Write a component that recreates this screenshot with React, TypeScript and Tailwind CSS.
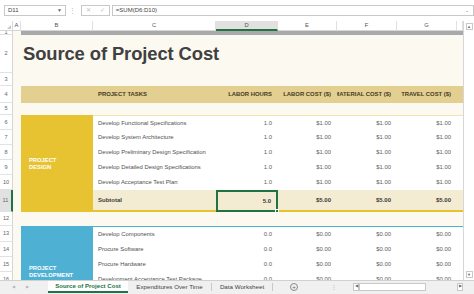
import React from 'react';

// grid row for sheet row r is R[r] (R[0] is the column header row)
const R = [
  'row-start-1', 'row-start-2', 'row-start-3', 'row-start-4', 'row-start-5', 'row-start-6',
  'row-start-7', 'row-start-8', 'row-start-9', 'row-start-10', 'row-start-11', 'row-start-12',
  'row-start-13', 'row-start-14', 'row-start-15', 'row-start-16', 'row-start-17', 'row-start-18',
  'row-start-19', 'row-start-20',
];
// grid column: 1 = row headers, 2 = A, 3 = B ... 9 = H
const COL = ['', 'col-start-1', 'col-start-2', 'col-start-3', 'col-start-4', 'col-start-5', 'col-start-6', 'col-start-7', 'col-start-8', 'col-start-9'];

const Cell: React.FC<{ c: number; r: number; className?: string; children?: React.ReactNode }> = ({ c, r, className = '', children }) => (
  <div className={`${COL[c]} ${R[r]} min-w-0 overflow-hidden whitespace-nowrap ${className}`}>{children}</div>
);

const designTasks = [
  'Develop Functional Specifications',
  'Develop System Architecture',
  'Develop Preliminary Design Specification',
  'Develop Detailed Design Specifications',
  'Develop Acceptance Test Plan',
];
const devTasks = ['Develop Components', 'Procure Software', 'Procure Hardware', 'Development Acceptance Test Package'];

const num = 'flex items-center justify-end pr-[6px] text-[5.9px] text-[#5e5e5e]';

const App: React.FC = () => {
  const rowNums = Array.from({ length: 16 }, (_, i) => i + 1);
  return (
    <div className="w-[474px] h-[294px] overflow-hidden bg-white flex flex-col font-['Liberation_Sans',Arial,sans-serif] text-[#444]">
      {/* formula bar */}
      <div className="h-[21px] shrink-0 flex items-center">
        <div className="ml-[4px] w-[62px] h-[11px] border border-[#c8c8c8] flex items-center justify-between px-[3px] text-[6px] text-[#444]">
          <span>D11</span>
          <span className="text-[5px] text-[#666]">▼</span>
        </div>
        <span className="ml-[3px] text-[7px] leading-none text-[#b0b0b0]">⋮</span>
        <div className="ml-[5px] w-[29px] h-[11px] border border-[#c8c8c8] flex items-center justify-around text-[6px] text-[#c0c0c0]">
          <span>✕</span>
          <span>✓</span>
        </div>
        <div className="ml-[2px] w-[363px] h-[11px] border border-[#c8c8c8] flex items-center justify-between pl-[3px] pr-[4px] text-[6px] text-[#444]">
          <span>=SUM(D6:D10)</span>
          <span className="text-[5px] text-[#777]">⌄</span>
        </div>
      </div>

      <div className="flex-1 min-h-0 flex">
        {/* sheet */}
        <div className="w-[463px] h-full overflow-hidden bg-[#fcf9f1]">
          <div className="grid grid-cols-[13px_8px_72px_123px_62px_59px_60px_60px_6px] grid-rows-[10px_4px_38px_13px_17px_12px_15px_15px_15px_15px_15px_22px_14px_16px_15px_15px_15px_15px_15px]">
            {/* column headers */}
            <Cell c={1} r={0} className="bg-white border-r border-b border-[#d6d6d6] relative">
              <span className="absolute right-[1px] bottom-[1px] w-0 h-0 border-l-[4px] border-l-transparent border-b-[4px] border-b-[#c8c8c8]" />
            </Cell>
            {['A', 'B', 'C', 'D', 'E', 'F', 'G', ''].map((l, i) => (
              <Cell
                key={i}
                c={i + 2}
                r={0}
                className={`flex items-center justify-center text-[5.8px] text-[#555] border-r border-[#e0e0e0] ${
                  l === 'D' ? 'bg-[#e1e1e1] border-b-2 border-b-[#217346]' : 'bg-white border-b border-b-[#d6d6d6]'
                }`}
              >
                {l}
              </Cell>
            ))}

            {/* row headers */}
            {rowNums.map((n) => (
              <Cell
                key={n}
                c={1}
                r={n}
                className={`flex items-center justify-center text-[5.6px] text-[#666] border-b border-[#e2e2e2] ${
                  n === 11 ? 'bg-[#e1e1e1] border-r-2 border-r-[#217346]' : 'bg-white border-r border-r-[#d6d6d6]'
                }`}
              >
                {n}
              </Cell>
            ))}
            <div className="col-start-1 row-start-18 row-span-3 bg-white border-r border-[#d6d6d6]" />

            {/* row 1 */}
            <div className="col-start-3 col-span-7 row-start-2 bg-[#a9a9a9]" />

            {/* row 2: title */}
            <div className="col-start-3 col-span-7 row-start-3 flex items-center pl-[2px]">
              <span className="text-[18.4px] font-bold text-[#404040] tracking-[-0.1px]">Source of Project Cost</span>
            </div>

            {/* row 4: table header */}
            <Cell c={3} r={4} className="bg-[#e3cf8f]" />
            <Cell c={4} r={4} className="bg-[#e3cf8f] flex items-center pl-[5px] text-[5.9px] font-bold text-[#453a22]">PROJECT TASKS</Cell>
            {['LABOR HOURS', 'LABOR COST ($)', 'MATERIAL COST ($)', 'TRAVEL COST ($)'].map((h, i) => (
              <Cell key={h} c={i + 5} r={4} className="bg-[#e3cf8f] flex items-center justify-end pr-[6px] text-[5.9px] font-bold text-[#453a22]">
                <span className="shrink-0">{h}</span>
              </Cell>
            ))}
            <Cell c={9} r={4} className="bg-[#e3cf8f]" />

            {/* project design block */}
            <div className="col-start-3 row-start-7 row-span-6 bg-[#e7c331] flex items-center pl-[8px] text-[5.8px] leading-[7px] font-bold text-white">
              <div>
                PROJECT
                <br />
                DESIGN
              </div>
            </div>
            {designTasks.map((t, i) => (
              <React.Fragment key={t}>
                <Cell c={4} r={6 + i} className={`bg-white flex items-center pl-[5px] text-[5.9px] text-[#505050] ${i === 0 ? 'border-t border-[#f0e3b4]' : ''}`}>{t}</Cell>
                <Cell c={5} r={6 + i} className={`bg-white ${num} ${i === 0 ? 'border-t border-[#f0e3b4]' : ''}`}>1.0</Cell>
                <Cell c={6} r={6 + i} className={`bg-white ${num} ${i === 0 ? 'border-t border-[#f0e3b4]' : ''}`}>$1.00</Cell>
                <Cell c={7} r={6 + i} className={`bg-white ${num} ${i === 0 ? 'border-t border-[#f0e3b4]' : ''}`}>$1.00</Cell>
                <Cell c={8} r={6 + i} className={`bg-white ${num} ${i === 0 ? 'border-t border-[#f0e3b4]' : ''}`}>$1.00</Cell>
                <Cell c={9} r={6 + i} className={`bg-white ${i === 0 ? 'border-t border-[#f0e3b4]' : ''}`} />
              </React.Fragment>
            ))}

            {/* subtotal */}
            <Cell c={4} r={11} className="bg-[#f4ecd2] border-b-2 border-[#e7c331] flex items-center pl-[5px] text-[6px] font-bold text-[#3a3a3a]">Subtotal</Cell>
            <div className="col-start-5 row-start-12 relative bg-[#f4ecd2] border-2 border-[#217346] flex items-center justify-end pr-[5px] text-[6px] font-bold text-[#3a3a3a]">
              5.0
              <span className="absolute -right-[3px] -bottom-[3px] w-[4px] h-[4px] bg-[#217346] border border-white" />
            </div>
            {[6, 7, 8].map((c) => (
              <Cell key={c} c={c} r={11} className="bg-[#f4ecd2] border-b-2 border-[#e7c331] flex items-center justify-end pr-[6px] text-[6px] font-bold text-[#3a3a3a]">$5.00</Cell>
            ))}
            <Cell c={9} r={11} className="bg-[#f4ecd2] border-b-2 border-[#e7c331]" />

            {/* project development block */}
            <div className="col-start-3 row-start-14 row-span-6 bg-[#4eb0d3] flex items-center pl-[8px] text-[5.8px] leading-[7px] font-bold text-white">
              <div>
                PROJECT
                <br />
                DEVELOPMENT
              </div>
            </div>
            {devTasks.map((t, i) => (
              <React.Fragment key={t}>
                <Cell c={4} r={13 + i} className={`bg-white flex items-center pl-[5px] text-[5.9px] text-[#505050] ${i === 0 ? 'border-t border-[#4eb0d3]' : ''}`}>{t}</Cell>
                <Cell c={5} r={13 + i} className={`bg-white ${num} ${i === 0 ? 'border-t border-[#4eb0d3]' : ''}`}>0.0</Cell>
                <Cell c={6} r={13 + i} className={`bg-white ${num} ${i === 0 ? 'border-t border-[#4eb0d3]' : ''}`}>$0.00</Cell>
                <Cell c={7} r={13 + i} className={`bg-white ${num} ${i === 0 ? 'border-t border-[#4eb0d3]' : ''}`}>$0.00</Cell>
                <Cell c={8} r={13 + i} className={`bg-white ${num} ${i === 0 ? 'border-t border-[#4eb0d3]' : ''}`}>$0.00</Cell>
                <Cell c={9} r={13 + i} className={`bg-white ${i === 0 ? 'border-t border-[#4eb0d3]' : ''}`} />
              </React.Fragment>
            ))}
          </div>
        </div>

        {/* vertical scrollbar */}
        <div className="w-[11px] h-full bg-white border-l border-[#d6d6d6] flex flex-col justify-between items-center py-[2px]">
          <div className="w-[7px] h-[7px] border border-[#c8c8c8] flex items-center justify-center text-[4px] text-[#666]">▲</div>
          <div className="w-[7px] h-[7px] border border-[#c8c8c8] flex items-center justify-center text-[4px] text-[#666]">▼</div>
        </div>
      </div>

      {/* sheet tabs */}
      <div className="h-[14px] shrink-0 flex items-stretch bg-[#f0f0f0] border-t border-[#d0d0d0] text-[6.2px] pb-[1px]">
        <div className="w-[48px] flex items-center pl-[12px] gap-[11px] text-[4px] text-[#b5b5b5]">
          <span>◀</span>
          <span>▶</span>
        </div>
        <div className="w-[80px] bg-white border-b-2 border-[#217346] flex items-center justify-center font-bold text-[6.1px] text-[#217346]">
          Source of Project Cost
        </div>
        <div className="w-[84px] flex items-center justify-center text-[#444] border-r border-[#c8c8c8] my-[2px]">Expenditures Over Time</div>
        <div className="w-[61px] flex items-center justify-center text-[#444] border-r border-[#c8c8c8] my-[2px]">Data Worksheet</div>
        <div className="w-[42px] flex items-center justify-center">
          <span className="w-[8px] h-[8px] rounded-full border border-[#8a8a8a] flex items-center justify-center text-[6px] leading-none text-[#666]">+</span>
        </div>
        <div className="w-[38px] flex items-center justify-center text-[6px] text-[#b0b0b0]">⋮</div>
        <div className="w-[110px] flex items-center">
          <div className="w-[6px] h-[8px] border border-[#c8c8c8] bg-white flex items-center justify-center text-[3.5px] text-[#666]">◀</div>
          <div className="w-[67px] h-[8px] border border-[#c8c8c8] bg-white" />
          <div className="flex-1" />
          <div className="w-[6px] h-[8px] border border-[#c8c8c8] bg-white flex items-center justify-center text-[3.5px] text-[#666]">▶</div>
        </div>
        <div className="flex-1" />
      </div>
    </div>
  );
};

export default App;
